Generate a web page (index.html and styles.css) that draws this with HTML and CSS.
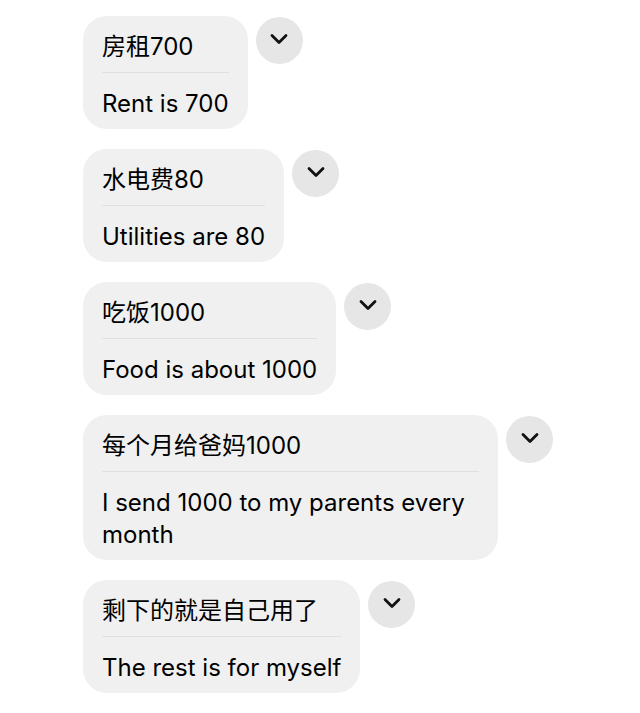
FILE: index.html
```html
<!DOCTYPE html>
<html lang="zh">
<head>
    <meta charset="UTF-8">
    <meta name="viewport" content="width=device-width, initial-scale=1.0">
    <title>Translations</title>
    <link rel="stylesheet" href="styles.css">
</head>
<body>
    <div class="thread">
        <div class="row">
            <div class="bubble">
                <div class="original">房租700</div>
                <div class="translation">Rent is 700</div>
            </div>
            <button class="toggle"><svg width="18" height="12" viewBox="0 0 18 12"><path d="M2 2.5l7 7 7-7" fill="none" stroke="#111" stroke-width="2.8" stroke-linecap="round" stroke-linejoin="round"/></svg></button>
        </div>

        <div class="row">
            <div class="bubble">
                <div class="original">水电费80</div>
                <div class="translation">Utilities are 80</div>
            </div>
            <button class="toggle"><svg width="18" height="12" viewBox="0 0 18 12"><path d="M2 2.5l7 7 7-7" fill="none" stroke="#111" stroke-width="2.8" stroke-linecap="round" stroke-linejoin="round"/></svg></button>
        </div>

        <div class="row">
            <div class="bubble">
                <div class="original">吃饭1000</div>
                <div class="translation">Food is about 1000</div>
            </div>
            <button class="toggle"><svg width="18" height="12" viewBox="0 0 18 12"><path d="M2 2.5l7 7 7-7" fill="none" stroke="#111" stroke-width="2.8" stroke-linecap="round" stroke-linejoin="round"/></svg></button>
        </div>

        <div class="row">
            <div class="bubble">
                <div class="original">每个月给爸妈1000</div>
                <div class="translation">I send 1000 to my parents every month</div>
            </div>
            <button class="toggle"><svg width="18" height="12" viewBox="0 0 18 12"><path d="M2 2.5l7 7 7-7" fill="none" stroke="#111" stroke-width="2.8" stroke-linecap="round" stroke-linejoin="round"/></svg></button>
        </div>

        <div class="row">
            <div class="bubble">
                <div class="original">剩下的就是自己用了</div>
                <div class="translation">The rest is for myself</div>
            </div>
            <button class="toggle"><svg width="18" height="12" viewBox="0 0 18 12"><path d="M2 2.5l7 7 7-7" fill="none" stroke="#111" stroke-width="2.8" stroke-linecap="round" stroke-linejoin="round"/></svg></button>
        </div>
    </div>
</body>
</html>
```

FILE: styles.css
```css
* {
    margin: 0;
    padding: 0;
    box-sizing: border-box;
}

body {
    font-family: Inter, "Noto Sans CJK SC", sans-serif;
    background: #fff;
    color: #000;
}

.thread {
    display: flex;
    flex-direction: column;
    gap: 20px;
    padding: 16px 0 0 83px;
}

.row {
    display: flex;
    align-items: flex-start;
    gap: 8px;
}

.bubble {
    max-width: 415px;
    background: #f0f0f0;
    border-radius: 24px;
    padding: 15px 19px 9px;
    font-size: 24px;
    line-height: 32px;
}

.original {
    padding-bottom: 9px;
    border-bottom: 1px solid #e0e0e0;
}

.translation {
    padding-top: 15px;
}

.toggle {
    width: 47px;
    height: 47px;
    margin-top: 1px;
    border: none;
    border-radius: 50%;
    background: #e6e6e6;
    display: flex;
    align-items: center;
    justify-content: center;
    flex-shrink: 0;
}

.toggle svg {
    margin-top: -3px;
}
```
